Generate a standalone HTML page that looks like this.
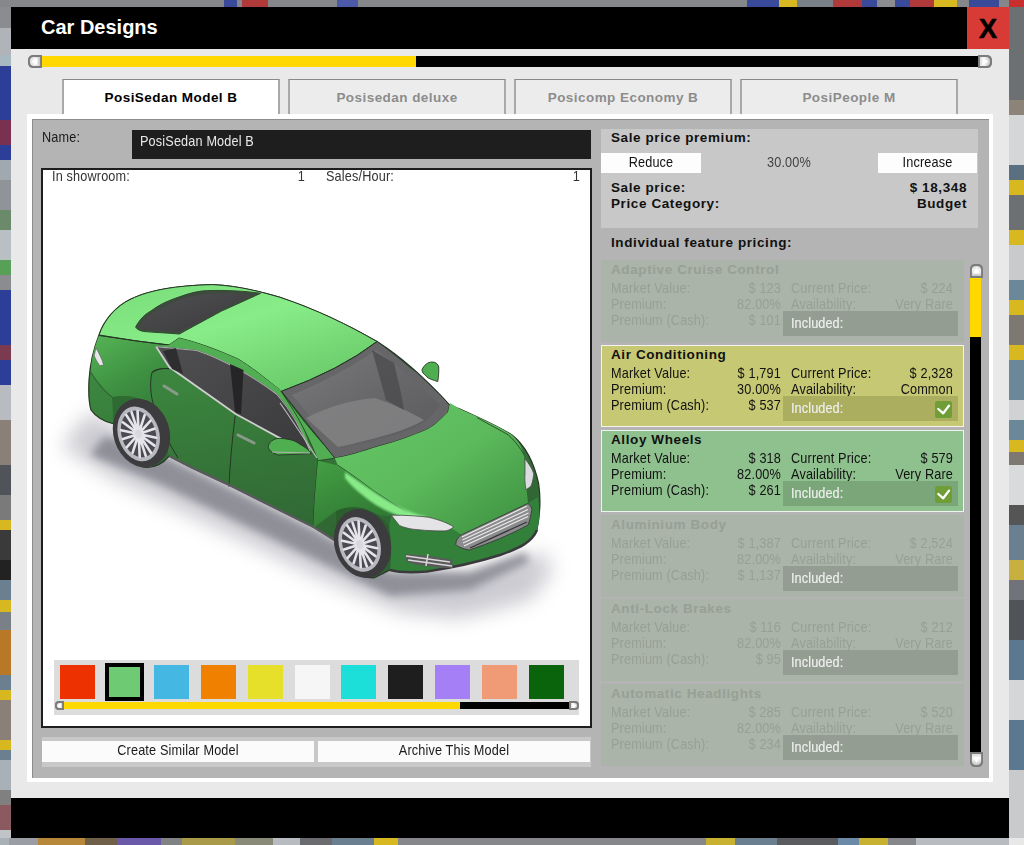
<!DOCTYPE html>
<html><head><meta charset="utf-8">
<style>
*{margin:0;padding:0;box-sizing:border-box}
html,body{width:1024px;height:845px;overflow:hidden}
body{position:relative;background:#7d8186;font-family:"Liberation Sans",sans-serif;}
.a{position:absolute}
#win{left:11px;top:7px;width:998px;height:831px;background:#e9e9e9}
#title{left:11px;top:7px;width:956px;height:42px;background:#000;color:#fff;font-weight:bold;font-size:20px}
#title span{position:absolute;left:30px;top:8.5px}
#close{left:967px;top:7px;width:42px;height:42px;background:#d83a36;color:#000;font-weight:bold;font-size:27px;text-align:center;line-height:44px;-webkit-text-stroke:0.6px #000}
#botbar{left:11px;top:798px;width:998px;height:40px;background:#000}
.tab{top:79px;height:35px;border:solid #a9a9a9;border-width:1px 2px 0 2px;border-top-color:#888;background:#ececec;color:#8c8c8c;font-weight:bold;font-size:13.5px;text-align:center;line-height:36px;letter-spacing:0.45px}
.tab.on{background:#fff;color:#000}
#panel{left:27px;top:114px;width:966px;height:668px;background:#fff}
#gray{left:32px;top:119px;width:957px;height:659px;background:#b4b4b4;border-top:1px solid #8d8d8d;border-left:1px solid #8d8d8d}
.t{position:absolute;font-size:12.7px;white-space:nowrap;line-height:14px;letter-spacing:0.15px;transform:scaleY(1.1);transform-origin:0 11.4px}
.b{font-weight:bold;letter-spacing:0.5px}
.r{text-align:right}

.item{position:absolute;left:601px;width:363px;height:82px}
.item .t{font-size:12.7px}
.item .h{position:absolute;left:10px;top:2px;font-weight:bold;font-size:13.5px;letter-spacing:0.6px;white-space:nowrap;line-height:14px}
.item .inc{position:absolute;left:182px;top:51px;width:175px;height:25px}
.item .inc span{position:absolute;left:8px;top:5.5px;font-size:12.7px;line-height:14px;color:#eef0ee;letter-spacing:0.1px;transform:scaleY(1.12);transform-origin:0 11.4px;-webkit-text-stroke:0.15px #eef0ee}
.dis{background:#aab4a8;color:#97a095}
.dis .inc{background:#949d92}
.yel{background:#c6c873;color:#111;border:1px solid #f4f4ec}
.yel .inc{background:#abad5f}
.grn{background:#8fc18f;color:#111;border:1px solid #f0f4f0}
.grn .inc{background:#7aa67a}
.chk{position:absolute;left:152px;top:5px;width:17px;height:17px;background:#6f9e36;border-radius:2.5px}
.p{font-size:12.7px}
</style></head><body>
<div class="a" style="left:0;top:0px;width:11px;height:28px;background:#8a8c90"></div><div class="a" style="left:0;top:28px;width:11px;height:27px;background:#b0b4b8"></div><div class="a" style="left:0;top:55px;width:11px;height:11px;background:#a8b8c0"></div><div class="a" style="left:0;top:66px;width:11px;height:54px;background:#2c3e98"></div><div class="a" style="left:0;top:120px;width:11px;height:25px;background:#7a3050"></div><div class="a" style="left:0;top:145px;width:11px;height:15px;background:#2c3e98"></div><div class="a" style="left:0;top:160px;width:11px;height:20px;background:#a0a8b0"></div><div class="a" style="left:0;top:180px;width:11px;height:30px;background:#909498"></div><div class="a" style="left:0;top:210px;width:11px;height:20px;background:#6a8a6a"></div><div class="a" style="left:0;top:230px;width:11px;height:30px;background:#b8c0c4"></div><div class="a" style="left:0;top:260px;width:11px;height:15px;background:#58a058"></div><div class="a" style="left:0;top:275px;width:11px;height:15px;background:#8a8c90"></div><div class="a" style="left:0;top:290px;width:11px;height:55px;background:#2c3e98"></div><div class="a" style="left:0;top:345px;width:11px;height:15px;background:#7a3a50"></div><div class="a" style="left:0;top:360px;width:11px;height:25px;background:#2c3e98"></div><div class="a" style="left:0;top:385px;width:11px;height:35px;background:#b8bcc0"></div><div class="a" style="left:0;top:420px;width:11px;height:45px;background:#8a8078"></div><div class="a" style="left:0;top:465px;width:11px;height:30px;background:#50545a"></div><div class="a" style="left:0;top:495px;width:11px;height:25px;background:#7a7a7a"></div><div class="a" style="left:0;top:520px;width:11px;height:10px;background:#d8b820"></div><div class="a" style="left:0;top:530px;width:11px;height:30px;background:#3a3a3a"></div><div class="a" style="left:0;top:560px;width:11px;height:20px;background:#222222"></div><div class="a" style="left:0;top:580px;width:11px;height:20px;background:#6a8090"></div><div class="a" style="left:0;top:600px;width:11px;height:12px;background:#d8b820"></div><div class="a" style="left:0;top:612px;width:11px;height:18px;background:#7a8088"></div><div class="a" style="left:0;top:630px;width:11px;height:45px;background:#b87828"></div><div class="a" style="left:0;top:675px;width:11px;height:15px;background:#6a8090"></div><div class="a" style="left:0;top:690px;width:11px;height:10px;background:#d8b820"></div><div class="a" style="left:0;top:700px;width:11px;height:40px;background:#8a8078"></div><div class="a" style="left:0;top:740px;width:11px;height:10px;background:#d8b820"></div><div class="a" style="left:0;top:750px;width:11px;height:10px;background:#6a8090"></div><div class="a" style="left:0;top:760px;width:11px;height:30px;background:#a8b0b8"></div><div class="a" style="left:0;top:790px;width:11px;height:15px;background:#808080"></div><div class="a" style="left:0;top:805px;width:11px;height:25px;background:#8a5a60"></div><div class="a" style="left:0;top:830px;width:11px;height:15px;background:#c0c4c8"></div><!--BG--><div class="a" style="left:1009px;top:0px;width:15px;height:100px;background:#6d7073"></div><div class="a" style="left:1009px;top:100px;width:15px;height:15px;background:#8c8478"></div><div class="a" style="left:1009px;top:115px;width:15px;height:50px;background:#d4d6d8"></div><div class="a" style="left:1009px;top:165px;width:15px;height:15px;background:#5a7080"></div><div class="a" style="left:1009px;top:180px;width:15px;height:15px;background:#d8b820"></div><div class="a" style="left:1009px;top:195px;width:15px;height:35px;background:#6d7073"></div><div class="a" style="left:1009px;top:230px;width:15px;height:15px;background:#d8b820"></div><div class="a" style="left:1009px;top:245px;width:15px;height:35px;background:#c8cacc"></div><div class="a" style="left:1009px;top:280px;width:15px;height:20px;background:#6a8898"></div><div class="a" style="left:1009px;top:300px;width:15px;height:15px;background:#d8b820"></div><div class="a" style="left:1009px;top:315px;width:15px;height:30px;background:#7e7872"></div><div class="a" style="left:1009px;top:345px;width:15px;height:15px;background:#d8b820"></div><div class="a" style="left:1009px;top:360px;width:15px;height:40px;background:#6a8898"></div><div class="a" style="left:1009px;top:400px;width:15px;height:20px;background:#d0d2d4"></div><div class="a" style="left:1009px;top:420px;width:15px;height:20px;background:#6a8898"></div><div class="a" style="left:1009px;top:440px;width:15px;height:12px;background:#d8b820"></div><div class="a" style="left:1009px;top:452px;width:15px;height:13px;background:#7e7872"></div><div class="a" style="left:1009px;top:465px;width:15px;height:40px;background:#d8dadc"></div><div class="a" style="left:1009px;top:505px;width:15px;height:20px;background:#555"></div><div class="a" style="left:1009px;top:525px;width:15px;height:35px;background:#6a8090"></div><div class="a" style="left:1009px;top:560px;width:15px;height:20px;background:#c8b040"></div><div class="a" style="left:1009px;top:580px;width:15px;height:20px;background:#70747a"></div><div class="a" style="left:1009px;top:600px;width:15px;height:40px;background:#505458"></div><div class="a" style="left:1009px;top:640px;width:15px;height:40px;background:#5a7890"></div><div class="a" style="left:1009px;top:680px;width:15px;height:40px;background:#d4d6d8"></div><div class="a" style="left:1009px;top:720px;width:15px;height:50px;background:#5a7890"></div><div class="a" style="left:1009px;top:770px;width:15px;height:75px;background:#c8cacc"></div><div class="a" style="left:0px;top:0;width:224px;height:7px;background:#85878a"></div><div class="a" style="left:224px;top:0;width:13px;height:7px;background:#3a4a9a"></div><div class="a" style="left:237px;top:0;width:5px;height:7px;background:#85878a"></div><div class="a" style="left:242px;top:0;width:26px;height:7px;background:#b03a3a"></div><div class="a" style="left:268px;top:0;width:69px;height:7px;background:#85878a"></div><div class="a" style="left:337px;top:0;width:21px;height:7px;background:#4a5aa8"></div><div class="a" style="left:358px;top:0;width:389px;height:7px;background:#85878a"></div><div class="a" style="left:747px;top:0;width:32px;height:7px;background:#3a4a9a"></div><div class="a" style="left:779px;top:0;width:18px;height:7px;background:#d8b820"></div><div class="a" style="left:797px;top:0;width:36px;height:7px;background:#7a8088"></div><div class="a" style="left:833px;top:0;width:29px;height:7px;background:#b03a3a"></div><div class="a" style="left:862px;top:0;width:15px;height:7px;background:#3a4a9a"></div><div class="a" style="left:877px;top:0;width:18px;height:7px;background:#8a8c90"></div><div class="a" style="left:895px;top:0;width:15px;height:7px;background:#3a4a9a"></div><div class="a" style="left:910px;top:0;width:24px;height:7px;background:#b03a3a"></div><div class="a" style="left:934px;top:0;width:23px;height:7px;background:#d8b820"></div><div class="a" style="left:957px;top:0;width:12px;height:7px;background:#85878a"></div><div class="a" style="left:969px;top:0;width:30px;height:7px;background:#3a4a9a"></div><div class="a" style="left:999px;top:0;width:10px;height:7px;background:#85878a"></div><div class="a" style="left:1009px;top:0;width:15px;height:7px;background:#c83030"></div><div class="a" style="left:0px;top:838px;width:9px;height:7px;background:#a8b0b8"></div><div class="a" style="left:9px;top:838px;width:29px;height:7px;background:#9a9ea4"></div><div class="a" style="left:38px;top:838px;width:47px;height:7px;background:#b8883a"></div><div class="a" style="left:85px;top:838px;width:32px;height:7px;background:#70604a"></div><div class="a" style="left:117px;top:838px;width:44px;height:7px;background:#6a58a8"></div><div class="a" style="left:161px;top:838px;width:21px;height:7px;background:#808284"></div><div class="a" style="left:182px;top:838px;width:53px;height:7px;background:#a89a48"></div><div class="a" style="left:235px;top:838px;width:38px;height:7px;background:#8a8a78"></div><div class="a" style="left:273px;top:838px;width:27px;height:7px;background:#b8bcc0"></div><div class="a" style="left:300px;top:838px;width:32px;height:7px;background:#6a6c70"></div><div class="a" style="left:332px;top:838px;width:42px;height:7px;background:#6a8090"></div><div class="a" style="left:374px;top:838px;width:24px;height:7px;background:#d8b820"></div><div class="a" style="left:398px;top:838px;width:308px;height:7px;background:#85878a"></div><div class="a" style="left:706px;top:838px;width:29px;height:7px;background:#c8b030"></div><div class="a" style="left:735px;top:838px;width:42px;height:7px;background:#6a8090"></div><div class="a" style="left:777px;top:838px;width:61px;height:7px;background:#5a5c60"></div><div class="a" style="left:838px;top:838px;width:21px;height:7px;background:#6a8aa8"></div><div class="a" style="left:859px;top:838px;width:29px;height:7px;background:#c8b030"></div><div class="a" style="left:888px;top:838px;width:28px;height:7px;background:#85878a"></div><div class="a" style="left:916px;top:838px;width:93px;height:7px;background:#b8bcc0"></div><div class="a" style="left:1009px;top:838px;width:15px;height:7px;background:#e8e8e8"></div><!--/BG-->
<div class="a" id="win"></div>
<div class="a" id="title"><span>Car Designs</span></div>
<div class="a" id="close">X</div>
<div class="a" id="botbar"></div>

<!-- top scrollbar -->
<div class="a" style="left:42px;top:56px;width:374px;height:11px;background:#ffd800"></div>
<div class="a" style="left:416px;top:56px;width:562px;height:11px;background:#000"></div>

<div class="a tab on" style="left:62px;width:218px">PosiSedan Model B</div>
<div class="a tab" style="left:288px;width:218px">Posisedan deluxe</div>
<div class="a tab" style="left:514px;width:218px">Posicomp Economy B</div>
<div class="a tab" style="left:740px;width:218px">PosiPeople M</div>

<div class="a" id="panel"></div>
<div class="a" id="gray"></div>


<!-- LEFT -->
<div class="t" style="left:42px;top:130.5px;color:#1a1a1a">Name:</div>
<div class="a" style="left:132px;top:130px;width:459px;height:29px;background:#1e1e1e"></div>
<div class="t" style="left:140px;top:135px;color:#e8e8e8">PosiSedan Model B</div>
<div class="a" style="left:41px;top:168px;width:551px;height:560px;background:#fff;border:2px solid #1e1e1e"></div>
<div class="t" style="left:52px;top:170px;color:#333">In showroom:</div>
<div class="t r" style="left:254px;width:51px;top:170px;color:#333">1</div>
<div class="t" style="left:326px;top:170px;color:#333">Sales/Hour:</div>
<div class="t r" style="left:530px;width:50px;top:170px;color:#333">1</div>
<!--CAR--><svg class="a" style="left:0;top:0" width="1024" height="845" viewBox="0 0 1024 845">
<defs>
<filter id="blur10" x="-30%" y="-30%" width="160%" height="160%"><feGaussianBlur stdDeviation="10"/></filter>
<filter id="blur4" x="-30%" y="-30%" width="160%" height="160%"><feGaussianBlur stdDeviation="4"/></filter>
<filter id="blur1" x="-30%" y="-30%" width="160%" height="160%"><feGaussianBlur stdDeviation="1.2"/></filter>
<linearGradient id="side" x1="0" y1="0" x2="0.25" y2="1">
<stop offset="0" stop-color="#44944a"/><stop offset="0.4" stop-color="#3a823d"/><stop offset="1" stop-color="#2e6232"/></linearGradient>
<linearGradient id="quarter" x1="0" y1="0" x2="0.4" y2="1">
<stop offset="0" stop-color="#56b456"/><stop offset="0.5" stop-color="#3f9242"/><stop offset="1" stop-color="#32763a"/></linearGradient>
<linearGradient id="roof" x1="0" y1="0" x2="0.8" y2="1">
<stop offset="0" stop-color="#78dc78"/><stop offset="0.45" stop-color="#88ec88"/><stop offset="1" stop-color="#66c866"/></linearGradient>
<linearGradient id="trunk" x1="0" y1="0" x2="0.3" y2="1">
<stop offset="0" stop-color="#6cd06c"/><stop offset="1" stop-color="#5cb85c"/></linearGradient>
<linearGradient id="hood" x1="0" y1="0" x2="1" y2="1">
<stop offset="0" stop-color="#66c866"/><stop offset="0.5" stop-color="#5cba5c"/><stop offset="1" stop-color="#3c8e3e"/></linearGradient>
<linearGradient id="fender" x1="0" y1="0" x2="0.6" y2="1">
<stop offset="0" stop-color="#44a044"/><stop offset="1" stop-color="#2f7632"/></linearGradient>
<linearGradient id="glass" x1="0" y1="0" x2="1" y2="1">
<stop offset="0" stop-color="#505052"/><stop offset="1" stop-color="#3a3a3c"/></linearGradient>
<linearGradient id="ws" x1="0" y1="0" x2="1" y2="1">
<stop offset="0" stop-color="#7a7a7c"/><stop offset="0.5" stop-color="#68686a"/><stop offset="1" stop-color="#5a5a5c"/></linearGradient>
<radialGradient id="rim" cx="0.45" cy="0.5" r="0.55">
<stop offset="0" stop-color="#e8e8ee"/><stop offset="0.75" stop-color="#c4c4cc"/><stop offset="1" stop-color="#8c8c94"/></radialGradient>
<symbol id="wheel" overflow="visible">
<ellipse rx="28" ry="35" fill="#3c3c3e"/>
<ellipse cx="-3" rx="20.5" ry="28" fill="#b8b8c0"/>
<ellipse cx="-3" rx="17" ry="24" fill="#4a4a50"/>
<g stroke="#e4e4ea" stroke-width="2.6" stroke-linecap="round">
<path d="M-3,0 L-3,-23 M-3,0 L-3,23 M-3,0 L13.5,0 M-3,0 L-19.5,0 M-3,0 L8.5,-16 M-3,0 L-14.5,16 M-3,0 L8.5,16 M-3,0 L-14.5,-16 M-3,0 L3,-22 M-3,0 L-9,22 M-3,0 L12.5,-9 M-3,0 L-18.5,9 M-3,0 L12.5,9 M-3,0 L-18.5,-9 M-3,0 L3,22 M-3,0 L-9,-22"/></g>
<ellipse cx="-3" rx="3.5" ry="4.5" fill="#d8d8de"/>
</symbol>
</defs>
<!-- shadow -->
<path d="M62,446 L112,478 L200,520 L320,578 L400,612 L460,618 L530,600 L552,572 L545,552 L520,560 L470,574 L390,572 L314,528 L169,456 L114,425 L90,412 Z" fill="#a8a8b2" opacity="0.6" filter="url(#blur10)"/>
<path d="M105,436 L169,458 L314,529 L390,572 L470,572 L525,552 L530,562 L470,590 L390,596 L300,552 L160,484 L90,455 Z" fill="#80808a" opacity="0.8" filter="url(#blur4)"/>
<!-- body silhouette -->
<path d="M99,335 C104,320 116,306 131,299 C150,290 175,285.5 213,284.6 C240,286 262,292 280,297.3 C318,310 348,325 377,341.5 C400,356 425,378 449.5,405 L460,409 C480,418 500,427 512,435 C526,446 534,462 538.7,484 C541,500 540,515 537,530 C532,542 520,548 500,555 C478,562 450,568 427,571.4 C410,573 398,572 390,570 L374,578 C355,578 342,565 336,541 L314,527.3 L232.7,486.7 L192,467.6 L169.2,456 C160,467 150,468 142.5,467 C128,462 118,448 114,424 C104,422 95,416 91,410 C88,400 88.5,390 89,380 C90,365 93,350 99,335 Z" fill="url(#side)" stroke="#263626" stroke-width="1.2"/>
<!-- rear quarter -->
<path d="M99,335.5 L137,341 L169,345 L156,346.6 L169,367 C160,368 153,370 152,372.5 C149,385 151,400 156,412 C161,428 165,436 169,443 L165,442 C160,425 150,405 142,401 C135,396 125,395 112,397 C104,388 96,380 91,372 C91,360 94,348 99,335.5 Z" fill="url(#quarter)"/>
<path d="M91,372.5 C98,384 105,392 112,397" fill="none" stroke="#2f4a2f" stroke-width="0.8"/>
<!-- rear door line -->
<path d="M169,368.7 C160,368 153,370 152,372.5 C149,385 151,400 156,412 C162,430 170,445 178,458" fill="none" stroke="#263626" stroke-width="1"/>
<!-- wheel arch darker -->
<path d="M112,397 C125,395 135,396 143,401 C152,408 160,425 166,444 L169,456 L150,468 L114,430 Z" fill="#2f6a32"/>
<path d="M336,511 C345,506 358,506 366,509 C375,513 383,518 389,526 L392,560 L336,545 Z" fill="#2a5e2c"/>
<!-- roof + trunk top -->
<path d="M99,335 C104,320 116,306 131,299 C150,290 175,285.5 213,284.6 C240,286 262,292 280,297.3 C318,310 348,325 377,341.5 Q340,370 281.5,391.3 C265,378 250,366 238,359 C220,351 200,343 179,338 L169,345 L137,341 Z" fill="url(#roof)" stroke="#263626" stroke-width="1"/>
<path d="M99,335.5 L137,341 L169,345" fill="none" stroke="#263626" stroke-width="1"/>
<!-- rear window -->
<path d="M135.6,327 C140,319 145,314 151,311 C160,304 170,300 179,297 C190,293 198,291 207.5,290.6 C225,290 245,291 260.6,293.3 C248,299 235,305 221.6,311 C205,320 192,327 179.4,334 C168,333 155,332.5 145,331.6 C140,331 137,329.5 135.6,327 Z" fill="#3f4a3f" stroke="#2f4a2f" stroke-width="1"/>
<path d="M140,327 C145,319 152,313 160,309 C175,301 190,296 207,294 C225,293 240,293.5 251,295 C240,300 228,306 218,312 C204,320 192,326 180,331 C168,330.5 155,330 146,329 Z" fill="url(#glass)"/>
<!-- side strip above windows -->
<path d="M169,345 L179,338 C200,343 220,351 238,359 C250,366 265,378 281,390.5 C292,403 302,420 311,451 L310,452 C303,430 290,410 277,394.5 C265,385 250,375 238,369 C220,360 205,352 196.6,350.5 L156,346.6 Z" fill="#52ae52"/>
<!-- side windows -->
<path d="M156,346.6 L196.6,350.5 C210,355 225,362 238,369 C252,377 265,385 277,394.5 C288,407 296,420 300,430 C305,440 308,446 310,451 L276.7,436.4 L235.7,414 L169.3,367 Z" fill="url(#glass)" stroke="#2a2a2a" stroke-width="0.8"/>
<path d="M156,346.6 L169.3,367 L235.7,414 L276.7,436.4 L310,453" fill="none" stroke="#cfcfcf" stroke-width="1.8"/>
<path d="M156,346.6 L196.6,350.5 C210,355 225,362 238,369 C252,377 265,385 277,394.5 C288,407 300,425 310,451" fill="none" stroke="#a8a8a8" stroke-width="1.1"/>
<path d="M230,364 L243.5,370 L241,414 L235,412 Z" fill="#252527"/>
<path d="M163,351 L176,348 L183,374 L172,369 Z" fill="#2e2e30"/>
<!-- rear door top edge -->
<path d="M152,372.5 C158,369 163,368 169,368.7" fill="none" stroke="#263626" stroke-width="1"/>
<!-- door split + front door line -->
<path d="M235.2,415.6 C232,440 230,465 228.9,486.7" fill="none" stroke="#263626" stroke-width="1"/>
<path d="M318,460.7 C316,480 314,505 313.2,527.9" fill="none" stroke="#263626" stroke-width="1"/>
<!-- door handles -->
<path d="M164,386 L177,394 M238,435 L254,443" stroke="#8a9a8a" stroke-width="3" stroke-linecap="round"/>
<!-- sill -->
<path d="M169.2,456 L192,467.6 L232.7,486.7 L314,527.3 L336,541" fill="none" stroke="#5a5a5c" stroke-width="2.4"/>
<!-- A pillar strip -->
<path d="M281,391 C295,410 310,430 336,458 L318,460.7 C310,440 300,420 290,405 Z" fill="#52ae52" stroke="#263626" stroke-width="0.8"/>
<path d="M280,403 C292,420 305,440 317,458" fill="none" stroke="#b8b8b8" stroke-width="1.2"/>
<!-- windshield -->
<path d="M281.5,391.3 Q340,370 377.2,341.5 C395,354 410,368 416.25,371.8 C430,385 442,396 449.5,405 L448,412 C440,420 435,425 428.4,428.8 C410,437 395,442 377.7,446.4 C360,452 348,456 334.7,458 Z" fill="#666668" stroke="#263626" stroke-width="1"/>
<path d="M292,395 Q342,374 376,350 C395,363 420,385 440,405 C432,416 425,422 414,428 C400,433 390,437 376,440 C360,444 350,447 338,449 Z" fill="url(#ws)"/>
<path d="M306,418 C325,408 350,400 375,398 C395,405 410,412 424,420 C410,428 392,434 372,439 C355,443 345,446 338,447 Z" fill="#828284" opacity="0.85"/>
<path d="M372,350 L394,363 C398,380 402,395 404,410 L386,400 Z" fill="#4a4a4c" opacity="0.75"/>
<!-- hood -->
<path d="M334.7,458 C348,456 360,452 377.7,446.4 C395,442 410,437 428.4,428.8 C435,425 440,420 448,412 L450,403 L460,409 C480,418 500,427 512,435 C522,444 526,455 525,475 L528,503 L462,535 C455,530 445,525 428,517.2 L391.25,515.2 C380,500 365,485 337.9,465.4 Z" fill="url(#hood)"/>
<path d="M337.9,465.4 C350,473 362.5,482.5 374,491 C385,498 395,505 408,512.7" fill="none" stroke="#263626" stroke-width="1"/>
<path d="M477,417.6 C490,425 500,430 508.4,435 C516,442 520,448 524,454.7" fill="none" stroke="#263626" stroke-width="0.8"/>
<!-- fender -->
<path d="M318,460.7 L337.9,465.4 C350,473 362.5,482.5 374,491 C385,498 395,505 408,512.7 L391,515.6 C383,518 375,513 366,509 C358,506 345,506 336,511 L313.2,527.9 C314,505 316,480 318,460.7 Z" fill="url(#fender)"/>
<!-- fender highlight streak -->
<path d="M345,472 C360,482 375,493 390,502 C402,509 414,514 428,517 L412,520 C400,517 388,512 376,505 C364,497 352,487 345,478 Z" fill="#8cf08c" opacity="0.95" filter="url(#blur1)"/>
<path d="M430,520 C440,523 452,528 462,535 L450,534 C442,530 436,526 430,520 Z" fill="#80e080" opacity="0.6"/>
<!-- front fascia -->
<path d="M391.25,515.2 L428.4,517.2 C445,525 455,530 462,535 L528,503 L538,497 C540,510 540,520 537,530 C532,542 520,548 500,555 C478,562 450,568 427,571.4 C410,573 398,572 390,570 C392,555 391,535 389,526 Z" fill="#32803a"/>
<path d="M390,570 C398,572 410,573 427,571.4 C450,568 478,562 500,555 C520,548 532,542 537,530" fill="none" stroke="#3a3a3c" stroke-width="2.5"/>
<!-- headlights -->
<path d="M391.25,515.2 C405,515 418,516 428.4,517.2 C440,520 448,523 453.75,527 C450,530 447,531 444,530.9 C430,531 420,530 410.8,528.9 C404,527.5 400,526 399,525 Z" fill="#e4e4e6" stroke="#4a4a4a" stroke-width="0.8"/>
<path d="M525,458.6 C529,464 533,470 533.8,474.2 C533,480 532,484 531,486 C529,488 527,489 526,489.8 C525,484 524.5,478 525,474.2 Z" fill="#dcdce0" stroke="#4a4a4a" stroke-width="0.8"/>
<!-- grille -->
<path d="M461.6,534.8 L528,503.5 C530,505 531.5,507 531.9,509.4 C531,515 530,520 528,525 C510,535 490,543 469.4,550 C463,549 458,547 455.7,544.5 C456,540 458,537 461.6,534.8 Z" fill="#8c8c8e" stroke="#3a3a3a" stroke-width="0.9"/>
<path d="M462,537 L527,506 M462.5,540 L528,509.5 M463,543 L528.5,513 M464,546 L528,516.5" stroke="#ececec" stroke-width="1.1"/>
<path d="M470,548 L527,522" stroke="#333" stroke-width="1.2"/>
<path d="M405,554 C420,555 440,557 452,560 L453,568 C440,568 420,566 407,562 Z" fill="#5a5a5c"/>
<path d="M406,556 L450,562 M408,560 L452,566" stroke="#d8d8d8" stroke-width="1.5"/>
<path d="M428,554 L426,566" stroke="#d8d8d8" stroke-width="1.5"/>
<!-- mirrors -->
<path d="M268.2,446 C270,440 276,438 281,438.4 C290,439 296,441 298.7,443.5 C305,447 309,450 311.4,453.6 L278.4,455 C272,453 268,450 268.2,446 Z" fill="#4fae4f" stroke="#263626" stroke-width="0.9"/>
<path d="M272,452 L310,453" stroke="#b0b0b0" stroke-width="1.2"/>
<path d="M422,369.8 C424,365 428,362 431.9,362 C436,362 438,364 438.7,367 C439,372 438.5,377 437.7,381.6 C433,380 430,379 428,377.7 C425,375 422,373 422,369.8 Z" fill="#4fae4f" stroke="#263626" stroke-width="0.9"/>
<!-- rear light -->
<path d="M96,347.9 C99,353 102,359 103.7,364.9 L99.9,365.8 C97,362 95,358 94.2,355.4 Z" fill="#e6e6e8" stroke="#555" stroke-width="0.6"/>
<!-- wheels -->
<use href="#wheel" transform="translate(141.5,433) rotate(-18)"/>
<use href="#wheel" transform="translate(362.5,543.5) rotate(-18)"/>
</svg>
<!--/CAR-->
<div class="a" style="left:54px;top:660px;width:525px;height:55px;background:#dcdcdc"></div>
<div class="a" style="left:60px;top:665px;width:35px;height:34px;background:#ee3100"></div>
<div class="a" style="left:105px;top:663px;width:39px;height:38px;background:#6ecb73;border:4px solid #000"></div>
<div class="a" style="left:154px;top:665px;width:35px;height:34px;background:#44b8e2"></div>
<div class="a" style="left:201px;top:665px;width:35px;height:34px;background:#f08000"></div>
<div class="a" style="left:248px;top:665px;width:35px;height:34px;background:#e6e02a"></div>
<div class="a" style="left:295px;top:665px;width:35px;height:34px;background:#f6f6f6"></div>
<div class="a" style="left:341px;top:665px;width:35px;height:34px;background:#1ddfd9"></div>
<div class="a" style="left:388px;top:665px;width:35px;height:34px;background:#1e1e1e"></div>
<div class="a" style="left:435px;top:665px;width:35px;height:34px;background:#a57ff5"></div>
<div class="a" style="left:482px;top:665px;width:35px;height:34px;background:#f09a76"></div>
<div class="a" style="left:529px;top:665px;width:35px;height:34px;background:#0a640c"></div>
<div class="a" style="left:64px;top:702px;width:396px;height:7px;background:#ffd800"></div>
<div class="a" style="left:460px;top:702px;width:109px;height:7px;background:#000"></div>
<div class="a" style="left:42px;top:737px;width:549px;height:30px;background:#c8c8c8"></div>
<div class="a" style="left:42px;top:741px;width:272px;height:21px;background:#fbfbfb"></div>
<div class="a" style="left:318px;top:741px;width:272px;height:21px;background:#fbfbfb"></div>
<div class="t" style="left:42px;width:272px;top:744px;color:#1a1a1a;text-align:center">Create Similar Model</div>
<div class="t" style="left:318px;width:272px;top:744px;color:#1a1a1a;text-align:center">Archive This Model</div>

<!-- RIGHT -->
<div class="a" style="left:601px;top:129px;width:377px;height:99px;background:#c8c8c8"></div>
<div class="h2 a" style="left:611px;top:131px;font-weight:bold;font-size:13.5px;letter-spacing:0.6px;line-height:14px;color:#111;white-space:nowrap">Sale price premium:</div>
<div class="a" style="left:601px;top:153px;width:100px;height:20px;background:#fdfdfd"></div>
<div class="t p" style="left:601px;width:100px;top:156px;text-align:center;color:#111">Reduce</div>
<div class="t p" style="left:740px;width:98px;top:156px;text-align:center;color:#444">30.00%</div>
<div class="a" style="left:878px;top:153px;width:99px;height:20px;background:#fdfdfd"></div>
<div class="t p" style="left:878px;width:99px;top:156px;text-align:center;color:#111">Increase</div>
<div class="a" style="left:611px;top:181px;font-weight:bold;font-size:13.5px;letter-spacing:0.6px;line-height:14px;color:#111;white-space:nowrap">Sale price:<br><span style="position:relative;top:2px">Price Category:</span></div>
<div class="a" style="left:767px;width:200px;top:181px;text-align:right;font-weight:bold;font-size:13.5px;letter-spacing:0.6px;line-height:14px;color:#111;white-space:nowrap">$ 18,348<br><span style="position:relative;top:2px">Budget</span></div>
<div class="a" style="left:611px;top:236px;font-weight:bold;font-size:13.5px;letter-spacing:0.6px;line-height:14px;color:#111;white-space:nowrap">Individual feature pricing:</div>
<div class="item dis" style="top:260px"><div class="h" style="left:10px;top:3px">Adaptive Cruise Control</div><div class="t" style="left:10px;top:21.5px">Market Value:</div><div class="t r" style="left:100px;width:80px;top:21.5px">$ 123</div><div class="t" style="left:190px;top:21.5px">Current Price:</div><div class="t r" style="left:272px;width:80px;top:21.5px">$ 224</div><div class="t" style="left:10px;top:37.5px">Premium:</div><div class="t r" style="left:100px;width:80px;top:37.5px">82.00%</div><div class="t" style="left:190px;top:37.5px">Availability:</div><div class="t r" style="left:272px;width:80px;top:37.5px">Very Rare</div><div class="t" style="left:10px;top:53.5px">Premium (Cash):</div><div class="t r" style="left:100px;width:80px;top:53.5px">$ 101</div><div class="inc" style="left:182px;top:51px"><span>Included:</span></div></div>
<div class="item yel" style="top:345px"><div class="h" style="left:9px;top:2px">Air Conditioning</div><div class="t" style="left:9px;top:20.5px">Market Value:</div><div class="t r" style="left:99px;width:80px;top:20.5px">$ 1,791</div><div class="t" style="left:189px;top:20.5px">Current Price:</div><div class="t r" style="left:271px;width:80px;top:20.5px">$ 2,328</div><div class="t" style="left:9px;top:36.5px">Premium:</div><div class="t r" style="left:99px;width:80px;top:36.5px">30.00%</div><div class="t" style="left:189px;top:36.5px">Availability:</div><div class="t r" style="left:271px;width:80px;top:36.5px">Common</div><div class="t" style="left:9px;top:52.5px">Premium (Cash):</div><div class="t r" style="left:99px;width:80px;top:52.5px">$ 537</div><div class="inc" style="left:181px;top:50px"><span>Included:</span><div class="chk"><svg width="17" height="17" viewBox="0 0 17 17"><path d="M3.3 8 L8.2 12.3 L14 4.6" fill="none" stroke="#fff" stroke-width="2.3" stroke-linecap="round" stroke-linejoin="round"/></svg></div></div></div>
<div class="item grn" style="top:430px"><div class="h" style="left:9px;top:2px">Alloy Wheels</div><div class="t" style="left:9px;top:20.5px">Market Value:</div><div class="t r" style="left:99px;width:80px;top:20.5px">$ 318</div><div class="t" style="left:189px;top:20.5px">Current Price:</div><div class="t r" style="left:271px;width:80px;top:20.5px">$ 579</div><div class="t" style="left:9px;top:36.5px">Premium:</div><div class="t r" style="left:99px;width:80px;top:36.5px">82.00%</div><div class="t" style="left:189px;top:36.5px">Availability:</div><div class="t r" style="left:271px;width:80px;top:36.5px">Very Rare</div><div class="t" style="left:9px;top:52.5px">Premium (Cash):</div><div class="t r" style="left:99px;width:80px;top:52.5px">$ 261</div><div class="inc" style="left:181px;top:50px"><span>Included:</span><div class="chk"><svg width="17" height="17" viewBox="0 0 17 17"><path d="M3.3 8 L8.2 12.3 L14 4.6" fill="none" stroke="#fff" stroke-width="2.3" stroke-linecap="round" stroke-linejoin="round"/></svg></div></div></div>
<div class="item dis" style="top:515px"><div class="h" style="left:10px;top:3px">Aluminium Body</div><div class="t" style="left:10px;top:21.5px">Market Value:</div><div class="t r" style="left:100px;width:80px;top:21.5px">$ 1,387</div><div class="t" style="left:190px;top:21.5px">Current Price:</div><div class="t r" style="left:272px;width:80px;top:21.5px">$ 2,524</div><div class="t" style="left:10px;top:37.5px">Premium:</div><div class="t r" style="left:100px;width:80px;top:37.5px">82.00%</div><div class="t" style="left:190px;top:37.5px">Availability:</div><div class="t r" style="left:272px;width:80px;top:37.5px">Very Rare</div><div class="t" style="left:10px;top:53.5px">Premium (Cash):</div><div class="t r" style="left:100px;width:80px;top:53.5px">$ 1,137</div><div class="inc" style="left:182px;top:51px"><span>Included:</span></div></div>
<div class="item dis" style="top:599px"><div class="h" style="left:10px;top:3px">Anti-Lock Brakes</div><div class="t" style="left:10px;top:21.5px">Market Value:</div><div class="t r" style="left:100px;width:80px;top:21.5px">$ 116</div><div class="t" style="left:190px;top:21.5px">Current Price:</div><div class="t r" style="left:272px;width:80px;top:21.5px">$ 212</div><div class="t" style="left:10px;top:37.5px">Premium:</div><div class="t r" style="left:100px;width:80px;top:37.5px">82.00%</div><div class="t" style="left:190px;top:37.5px">Availability:</div><div class="t r" style="left:272px;width:80px;top:37.5px">Very Rare</div><div class="t" style="left:10px;top:53.5px">Premium (Cash):</div><div class="t r" style="left:100px;width:80px;top:53.5px">$ 95</div><div class="inc" style="left:182px;top:51px"><span>Included:</span></div></div>
<div class="item dis" style="top:684px"><div class="h" style="left:10px;top:3px">Automatic Headlights</div><div class="t" style="left:10px;top:21.5px">Market Value:</div><div class="t r" style="left:100px;width:80px;top:21.5px">$ 285</div><div class="t" style="left:190px;top:21.5px">Current Price:</div><div class="t r" style="left:272px;width:80px;top:21.5px">$ 520</div><div class="t" style="left:10px;top:37.5px">Premium:</div><div class="t r" style="left:100px;width:80px;top:37.5px">82.00%</div><div class="t" style="left:190px;top:37.5px">Availability:</div><div class="t r" style="left:272px;width:80px;top:37.5px">Very Rare</div><div class="t" style="left:10px;top:53.5px">Premium (Cash):</div><div class="t r" style="left:100px;width:80px;top:53.5px">$ 234</div><div class="inc" style="left:182px;top:51px"><span>Included:</span></div></div>

<div class="a" style="left:970px;top:278px;width:11px;height:59px;background:#ffd800"></div>
<div class="a" style="left:970px;top:337px;width:11px;height:416px;background:#000"></div>
<svg class="a" style="left:28px;top:55px" width="14" height="13" viewBox="0 0 14 13"><defs><linearGradient id="g28_55" x1="0" y1="0" x2="1" y2="0"><stop offset="0" stop-color="#d8d8d8"/><stop offset="0.45" stop-color="#f4f4f4"/><stop offset="1" stop-color="#bcbcbc"/></linearGradient></defs><path d="M13.2,0.8 L6.26,0.8 Q0.8,0.8 0.8,6.26 L0.8,6.739999999999999 Q0.8,12.2 6.26,12.2 L13.2,12.2 Z" fill="url(#g28_55)" stroke="#7c7c7c" stroke-width="2.2"/><path d="M3.5,6.5 L9.520000000000001,2.86 L9.520000000000001,10.14 Z" fill="#fff"/></svg>
<svg class="a" style="left:978px;top:55px" width="14" height="13" viewBox="0 0 14 13"><defs><linearGradient id="g978_55" x1="0" y1="0" x2="1" y2="0"><stop offset="0" stop-color="#d8d8d8"/><stop offset="0.45" stop-color="#f4f4f4"/><stop offset="1" stop-color="#bcbcbc"/></linearGradient></defs><path d="M0.8,0.8 L7.739999999999999,0.8 Q13.2,0.8 13.2,6.26 L13.2,6.739999999999999 Q13.2,12.2 7.739999999999999,12.2 L0.8,12.2 Z" fill="url(#g978_55)" stroke="#7c7c7c" stroke-width="2.2"/><path d="M10.5,6.5 L4.48,2.86 L4.48,10.14 Z" fill="#fff"/></svg>
<svg class="a" style="left:970px;top:264px" width="13" height="14" viewBox="0 0 13 14"><defs><linearGradient id="g970_264" x1="0" y1="0" x2="0" y2="1"><stop offset="0" stop-color="#d8d8d8"/><stop offset="0.45" stop-color="#f4f4f4"/><stop offset="1" stop-color="#bcbcbc"/></linearGradient></defs><path d="M0.8,13.2 L0.8,6.26 Q0.8,0.8 6.26,0.8 L6.739999999999999,0.8 Q12.2,0.8 12.2,6.26 L12.2,13.2 Z" fill="url(#g970_264)" stroke="#7c7c7c" stroke-width="2.2"/><path d="M6.5,3.5 L2.86,9.520000000000001 L10.14,9.520000000000001 Z" fill="#fff"/></svg>
<svg class="a" style="left:970px;top:752px" width="13" height="15" viewBox="0 0 13 15"><defs><linearGradient id="g970_752" x1="0" y1="0" x2="0" y2="1"><stop offset="0" stop-color="#d8d8d8"/><stop offset="0.45" stop-color="#f4f4f4"/><stop offset="1" stop-color="#bcbcbc"/></linearGradient></defs><path d="M0.8,0.8 L0.8,8.739999999999998 Q0.8,14.2 6.26,14.2 L6.739999999999999,14.2 Q12.2,14.2 12.2,8.739999999999998 L12.2,0.8 Z" fill="url(#g970_752)" stroke="#7c7c7c" stroke-width="2.2"/><path d="M6.5,11.25 L2.86,4.8 L10.14,4.8 Z" fill="#fff"/></svg>
<svg class="a" style="left:55px;top:701px" width="9" height="9" viewBox="0 0 9 9"><defs><linearGradient id="g55_701" x1="0" y1="0" x2="1" y2="0"><stop offset="0" stop-color="#d8d8d8"/><stop offset="0.45" stop-color="#f4f4f4"/><stop offset="1" stop-color="#bcbcbc"/></linearGradient></defs><path d="M8.2,0.8 L4.58,0.8 Q0.8,0.8 0.8,4.58 L0.8,4.42 Q0.8,8.2 4.58,8.2 L8.2,8.2 Z" fill="url(#g55_701)" stroke="#7c7c7c" stroke-width="2.2"/><path d="M2.25,4.5 L6.12,1.98 L6.12,7.0200000000000005 Z" fill="#fff"/></svg>
<svg class="a" style="left:569px;top:701px" width="10" height="9" viewBox="0 0 10 9"><defs><linearGradient id="g569_701" x1="0" y1="0" x2="1" y2="0"><stop offset="0" stop-color="#d8d8d8"/><stop offset="0.45" stop-color="#f4f4f4"/><stop offset="1" stop-color="#bcbcbc"/></linearGradient></defs><path d="M0.8,0.8 L5.42,0.8 Q9.2,0.8 9.2,4.58 L9.2,4.42 Q9.2,8.2 5.42,8.2 L0.8,8.2 Z" fill="url(#g569_701)" stroke="#7c7c7c" stroke-width="2.2"/><path d="M7.5,4.5 L3.2,1.98 L3.2,7.0200000000000005 Z" fill="#fff"/></svg>
</body></html>
